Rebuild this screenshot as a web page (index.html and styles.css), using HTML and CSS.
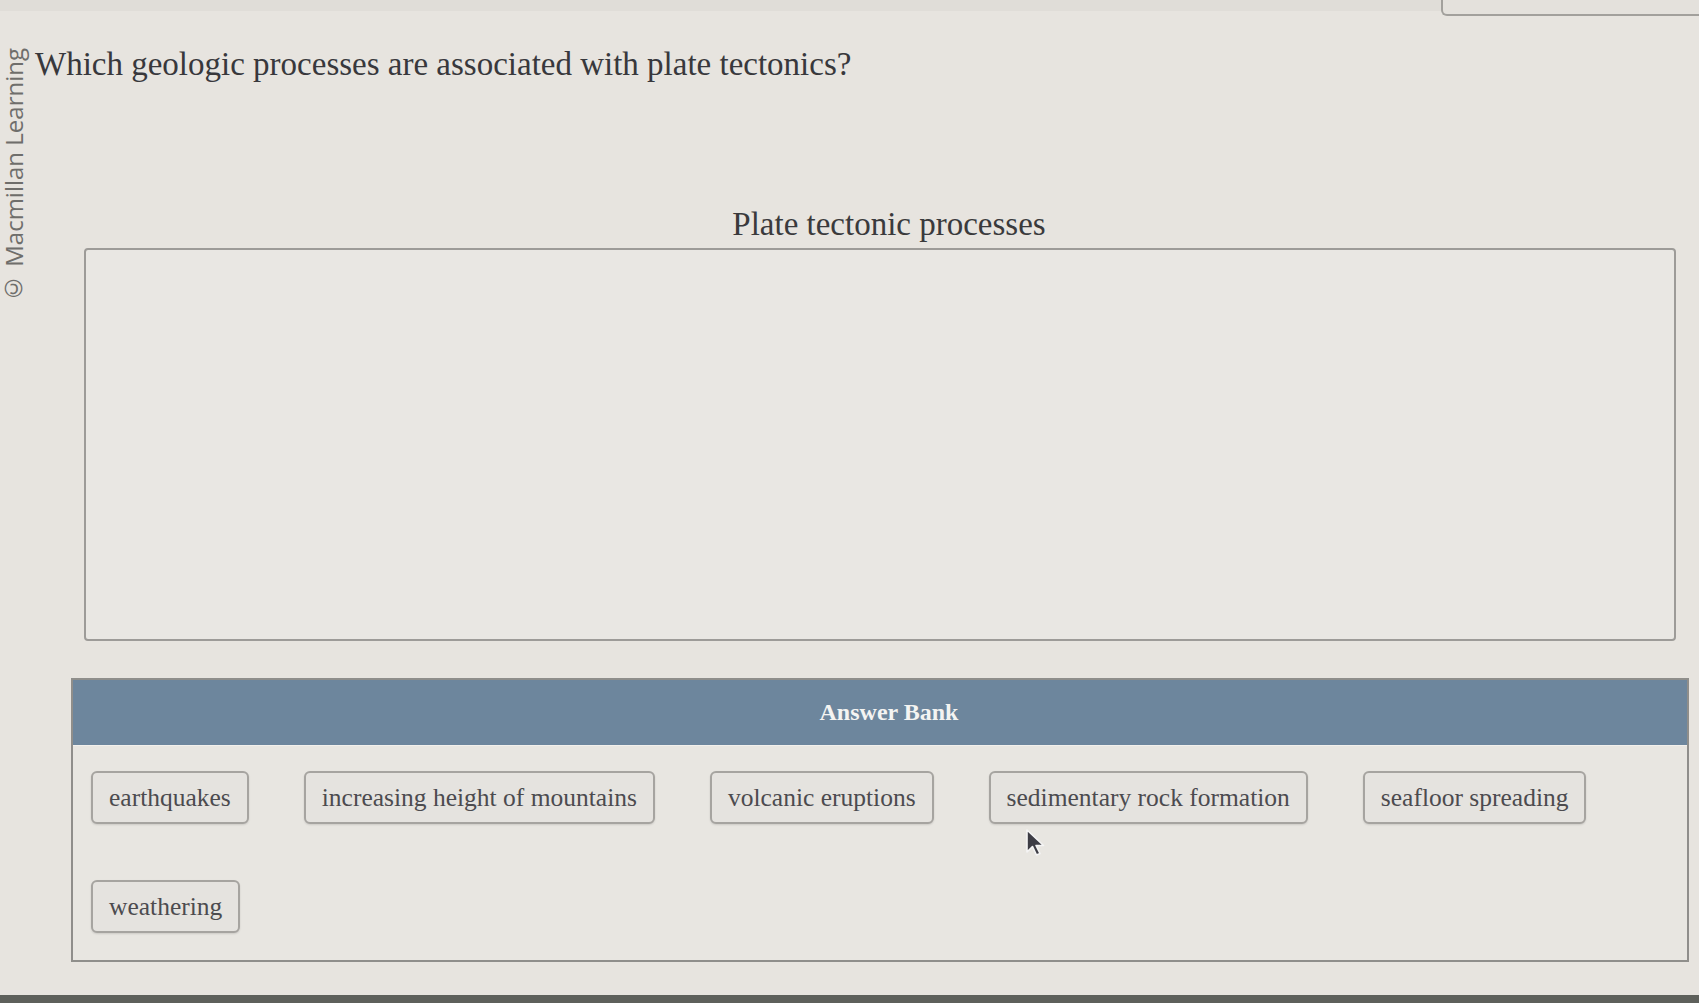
FILE: index.html
```html
<!DOCTYPE html>
<html lang="en">
<head>
<meta charset="utf-8">
<title>Plate tectonics</title>
<link rel="stylesheet" href="styles.css">
</head>
<body>
<div class="page">
  <div class="topbar">
    <div class="topbar-left"></div>
    <div class="topbar-tab"></div>
  </div>
  <div class="main">
    <aside class="copyright"><span class="copyright-text">© Macmillan Learning</span></aside>
    <div class="content">
      <h1 class="question">Which geologic processes are associated with plate tectonics?</h1>
      <section class="target">
        <h2 class="target-title">Plate tectonic processes</h2>
        <div class="dropzone"></div>
      </section>
      <section class="bank">
        <div class="bank-header">Answer Bank</div>
        <div class="bank-body">
          <div class="chip">earthquakes</div>
          <div class="chip">increasing height of mountains</div>
          <div class="chip">volcanic eruptions</div>
          <div class="chip">sedimentary rock formation</div>
          <div class="chip">seafloor spreading</div>
          <div class="chip">weathering</div>
        </div>
      </section>
    </div>
  </div>
  <div class="bottombar"></div>
  <svg class="cursor" width="22" height="30" viewBox="0 0 22 30" aria-hidden="true">
    <path d="M2 2 L2 24 L7.5 18.5 L11.5 27 L15 25.5 L11 17.5 L18.5 17.5 Z" fill="#3c3c44" stroke="#f4f4f4" stroke-width="1.6" stroke-linejoin="round"/>
  </svg>
</div>
</body>
</html>
```

FILE: styles.css
```css
* { box-sizing: border-box; }

html, body {
  margin: 0;
  padding: 0;
  background: #e7e4df;
}

.page {
  position: relative;
  min-height: 100vh;
  display: flex;
  flex-direction: column;
  font-family: "Liberation Serif", "Times New Roman", serif;
  background: #e7e4df;
}

.topbar {
  display: flex;
  height: 16px;
}

.topbar-left {
  width: 1441px;
  height: 11px;
  background: #e0ddd8;
}

.topbar-tab {
  flex: 1;
  border-left: 2px solid #a2a09c;
  border-bottom: 2px solid #a2a09c;
  border-bottom-left-radius: 6px;
  background: #e4e1dc;
}

.main {
  display: flex;
  flex: 1;
}

.copyright {
  width: 28px;
  flex: none;
  padding-top: 32px;
  padding-left: 1px;
}

.copyright-text {
  display: block;
  writing-mode: vertical-rl;
  transform: rotate(180deg);
  font-family: "Open Sans", "DejaVu Sans", sans-serif;
  font-size: 24px;
  line-height: 26px;
  color: #6f6e6b;
  white-space: nowrap;
}

.content {
  flex: 1;
  display: flex;
  flex-direction: column;
}

.question {
  margin: 28px 0 0 7px;
  font-size: 33px;
  line-height: 40px;
  font-weight: normal;
  color: #38383c;
}

.target {
  margin: 120px 0 0 56px;
  width: 1592px;
  display: flex;
  flex-direction: column;
}

.target-title {
  margin: 0;
  text-align: center;
  font-size: 33px;
  line-height: 40px;
  font-weight: normal;
  color: #3a3a3c;
  padding-left: 18px;
}

.dropzone {
  margin-top: 4px;
  height: 393px;
  border: 2px solid #9d9b98;
  border-radius: 4px;
  background: #e9e7e3;
}

.bank {
  margin: 37px 0 0 43px;
  width: 1618px;
  border: 2px solid #8f8e8b;
}

.bank-header {
  height: 65px;
  background: #6d869d;
  color: #f4f4f2;
  font-size: 24px;
  font-weight: bold;
  line-height: 65px;
  text-align: center;
  padding-left: 18px;
}

.bank-body {
  display: flex;
  flex-wrap: wrap;
  column-gap: 55px;
  row-gap: 56px;
  padding: 25px 18px 27px 18px;
  background: #e8e6e1;
  border-top: 1px solid #f2f0ec;
}

.chip {
  height: 53px;
  padding: 9px 16px;
  border: 2px solid #a6a4a0;
  border-radius: 6px;
  background: #e5e3df;
  box-shadow: 0 1px 2px rgba(0, 0, 0, 0.12);
  font-size: 25.5px;
  line-height: 31px;
  color: #4c4b4f;
  white-space: nowrap;
}

.bottombar {
  margin-top: auto;
  height: 8px;
  background: #5e605b;
}

.cursor {
  position: absolute;
  left: 1025px;
  top: 828px;
}
```
